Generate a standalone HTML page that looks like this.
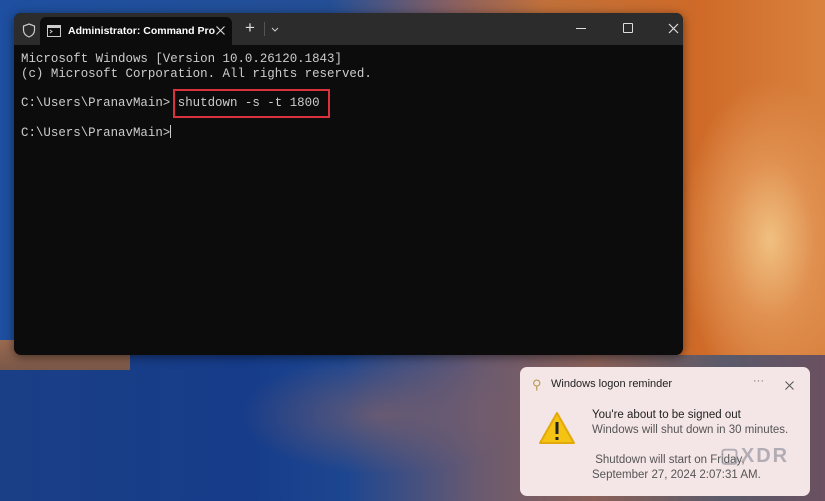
<!DOCTYPE html>
<html><head><style>
*{margin:0;padding:0;box-sizing:border-box}
body{width:825px;height:501px;overflow:hidden;position:relative;font-family:"Liberation Sans",sans-serif;
background:
radial-gradient(ellipse 90px 160px at 770px 240px,#f0c080 0%,#e09050 50%,rgba(210,110,40,0) 100%),
linear-gradient(90deg,#1e4fa0 0%,#244f96 40%,#8a6060 55%,#c0703a 66%,#cf6a28 85%,#d9823f 100%);}
.sea{position:absolute;left:0;top:355px;width:825px;height:146px;
background:
radial-gradient(ellipse 140px 60px at 380px 60px,rgba(140,100,100,.6),rgba(0,0,0,0)),
linear-gradient(90deg,#1b3f86 0%,#163c8a 30%,#1d4690 42%,#6a5a70 58%,#8a6058 72%,#5a5a6a 88%,#6a5060 100%);}
.rock{position:absolute;left:0;top:340px;width:130px;height:30px;background:linear-gradient(180deg,#9a6a50,#7a5848);}
.win{position:absolute;left:14px;top:13px;width:669px;height:342px;background:#0c0c0c;border-radius:7px;overflow:hidden;box-shadow:0 2px 10px rgba(0,0,0,.5)}
.tb{height:32px;background:#2c2c2c;position:relative}
.tab{position:absolute;left:26px;top:4px;width:192px;height:28px;background:#0c0c0c;border-radius:6px 6px 0 0;color:#fff;font-size:10.5px;font-weight:bold}
.term{font-family:"Liberation Mono",monospace;font-size:12.45px;line-height:14.6px;color:#cccccc;padding:7px 0 0 7px;white-space:pre}
.box{position:absolute;left:159px;top:76px;width:157px;height:29px;border:2px solid #d9323c}
.note{position:absolute;left:520px;top:367px;width:290px;height:129px;background:#f4e5e6;border-radius:7px;color:#222;font-size:11.5px}
</style></head><body>
<div class="sea"></div><div class="rock"></div>
<div class="win">
 <div class="tb">
  <svg style="position:absolute;left:8px;top:10px" width="14" height="15" viewBox="0 0 14 15"><path d="M7 1 L12.5 3 V7 C12.5 10.5 10 12.8 7 14 C4 12.8 1.5 10.5 1.5 7 V3 Z" fill="none" stroke="#ccc" stroke-width="1.2"/></svg>
  <div class="tab">
   <svg style="position:absolute;left:7px;top:8px" width="14" height="12" viewBox="0 0 14 12"><rect x=".5" y=".5" width="13" height="11" fill="none" stroke="#ccc"/><rect x="1" y="1" width="12" height="2" fill="#ccc"/><path d="M3 5 l2 1.5 -2 1.5" stroke="#ccc" fill="none"/></svg>
   <span style="position:absolute;left:28px;top:8px;white-space:nowrap">Administrator: Command Pro</span>
   <svg style="position:absolute;left:176px;top:9px" width="9" height="9"><path d="M.5 .5 L8.5 8.5 M8.5 .5 L.5 8.5" stroke="#ddd" stroke-width="1.1"/></svg>
  </div>
  <span style="position:absolute;left:231px;top:5px;color:#ddd;font-size:17px">+</span>
  <div style="position:absolute;left:250px;top:9px;width:1px;height:14px;background:#555"></div>
  <svg style="position:absolute;left:257px;top:14px" width="8" height="5"><path d="M1 1 L4 4 L7 1" stroke="#ccc" fill="none"/></svg>
  <div style="position:absolute;left:562px;top:15px;width:10px;height:1px;background:#ddd"></div>
  <div style="position:absolute;left:609px;top:10px;width:10px;height:10px;border:1px solid #ddd;border-radius:1px"></div>
  <svg style="position:absolute;left:654px;top:10px" width="11" height="11"><path d="M1 1 L10 10 M10 1 L1 10" stroke="#ddd" stroke-width="1.2"/></svg>
 </div>
 <div class="term">Microsoft Windows [Version 10.0.26120.1843]
(c) Microsoft Corporation. All rights reserved.

C:\Users\PranavMain&gt; shutdown -s -t 1800

C:\Users\PranavMain&gt;<span style="display:inline-block;width:1px;height:13px;background:#ccc;vertical-align:-2px"></span></div>
 <div class="box"></div>
</div>
<div class="note">
 <span style="position:absolute;left:12px;top:10px;color:#b89a50;font-size:13px">⚲</span>
 <span style="position:absolute;left:31px;top:11px;font-size:11px">Windows logon reminder</span>
 <span style="position:absolute;left:233px;top:8px;color:#777;font-size:11px">···</span>
 <svg style="position:absolute;left:265px;top:14px" width="9" height="9"><path d="M.5 .5 L8.5 8.5 M8.5 .5 L.5 8.5" stroke="#555"/></svg>
 <svg style="position:absolute;left:18px;top:44px" width="38" height="34" viewBox="0 0 38 34"><path d="M19 2 L36 32 H2 Z" fill="#f5c313" stroke="#e3a90a" stroke-linejoin="round" stroke-width="2"/><rect x="17.5" y="11" width="3" height="12" fill="#222"/><rect x="17.5" y="26" width="3" height="3" fill="#222"/></svg>
 <div style="position:absolute;left:72px;top:41px;line-height:15px;white-space:nowrap">You're about to be signed out<br><span style="color:#555">Windows will shut down in 30 minutes.</span></div>
 <div style="position:absolute;left:72px;top:86px;line-height:15px;color:#555;white-space:nowrap">&nbsp;Shutdown will start on Friday,<br>September 27, 2024 2:07:31 AM.</div>
 <span style="position:absolute;left:200px;top:76px;font-size:20px;color:rgba(150,150,160,.7);letter-spacing:2px;font-weight:bold">▢XDR</span>
</div>
</body></html>
